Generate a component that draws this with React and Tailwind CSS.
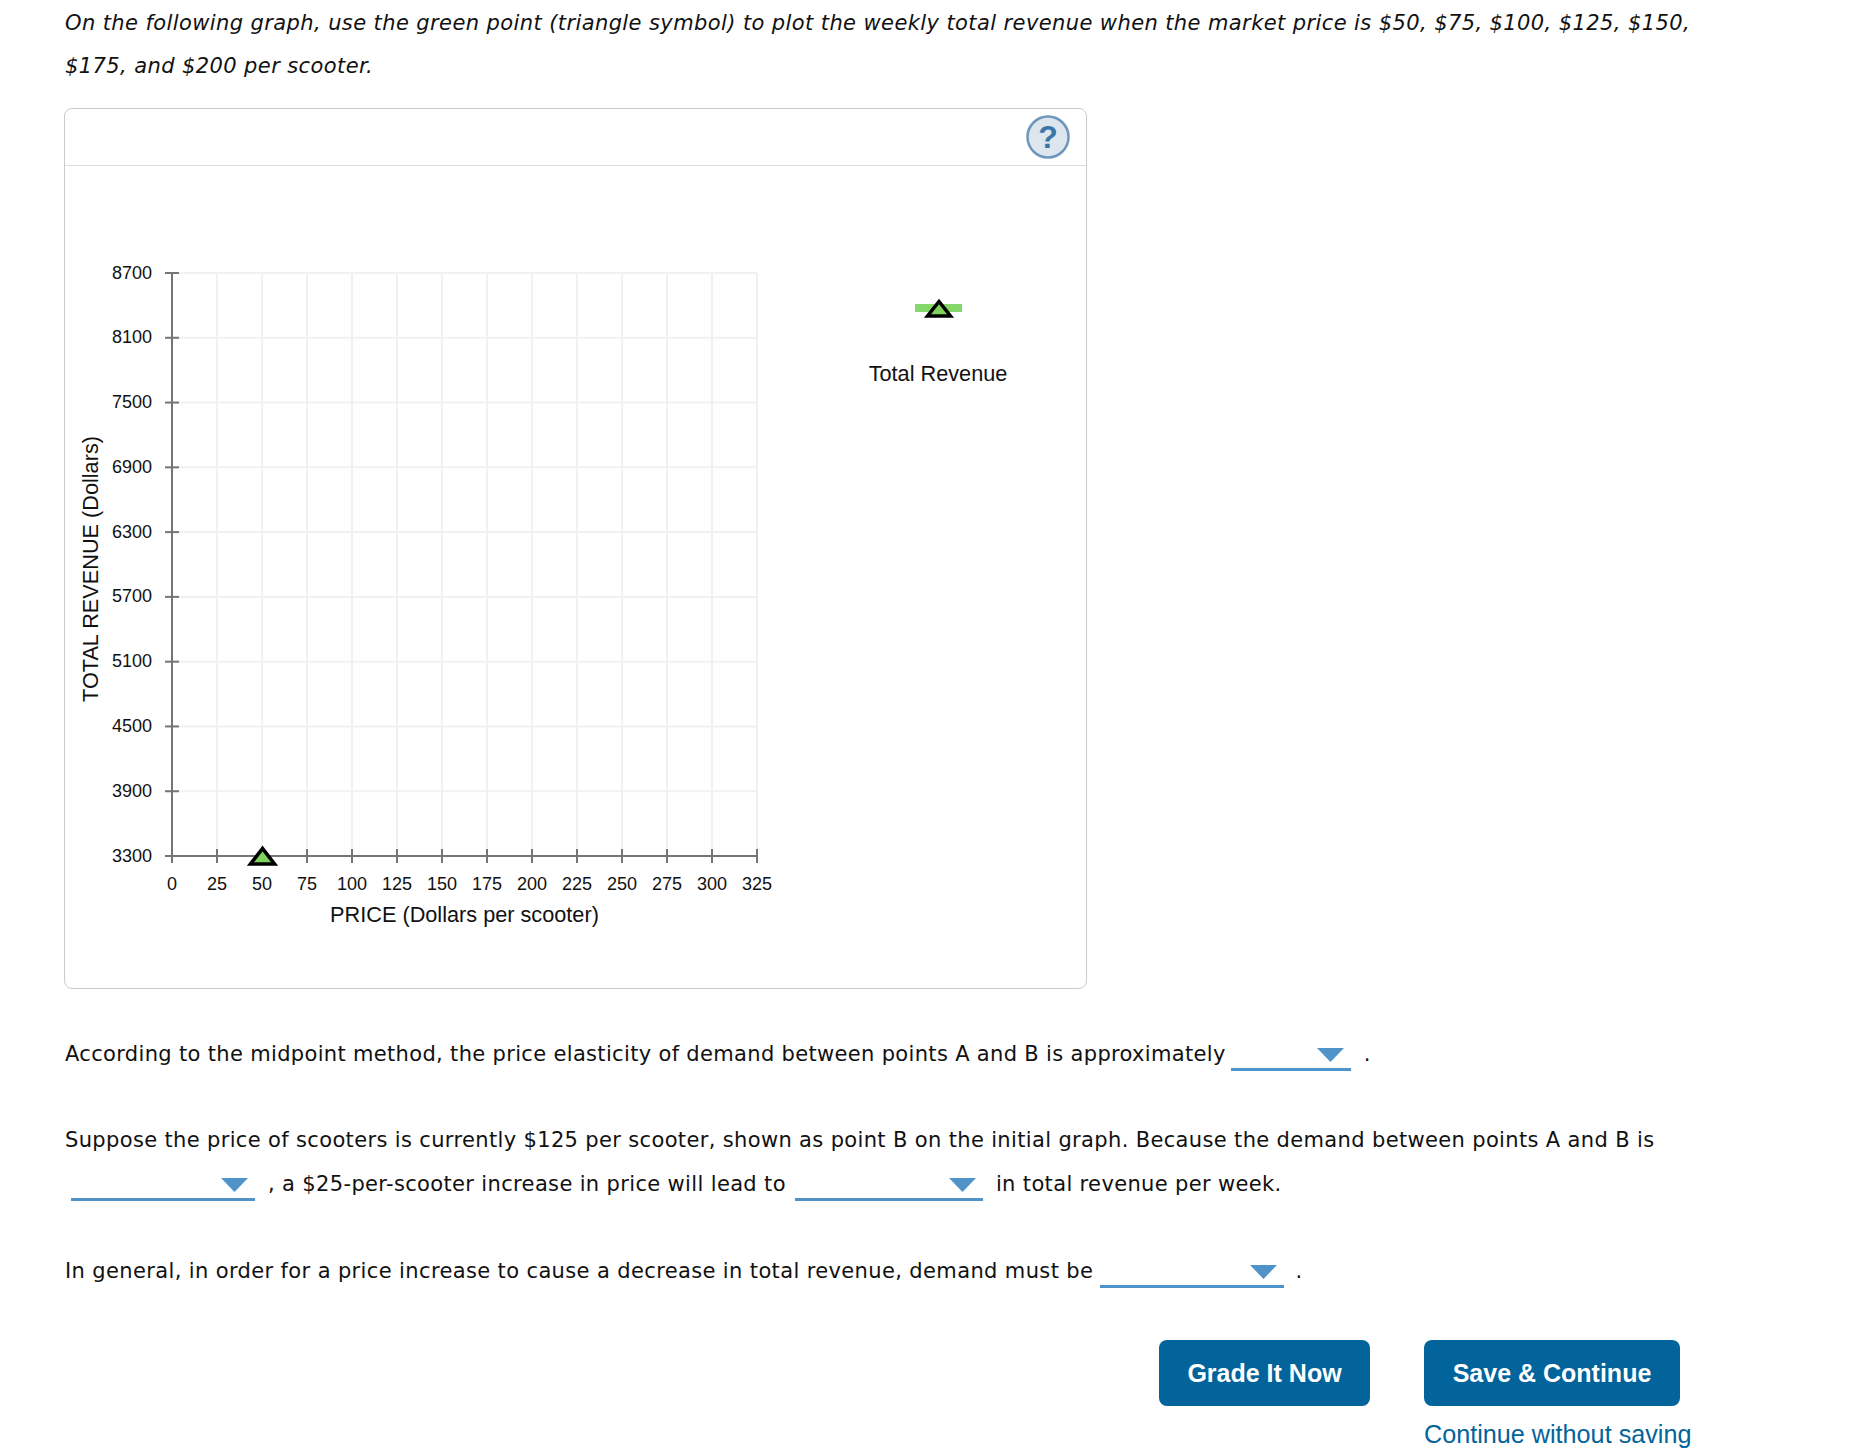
const SANS = 'font-["Liberation_Sans",Arial,sans-serif]';

const yLabels = [8700, 8100, 7500, 6900, 6300, 5700, 5100, 4500, 3900, 3300];
const xLabels = [0, 25, 50, 75, 100, 125, 150, 175, 200, 225, 250, 275, 300, 325];

function Chart() {
  const left = 172;
  const right = 757;
  const top = 273;
  const bottom = 856;
  const stepX = (right - left) / 13;
  const stepY = (bottom - top) / 9;
  return (
    <svg width="780" height="822" viewBox="65 166 780 822" className="block shrink-0" fontFamily="'Liberation Sans', Arial, sans-serif">
      {xLabels.slice(1).map((_, i) => (
        <line key={i} x1={left + stepX * (i + 1)} x2={left + stepX * (i + 1)} y1={top} y2={bottom} stroke="#f1f1f1" strokeWidth="2" />
      ))}
      {yLabels.slice(0, -1).map((_, i) => (
        <line key={i} x1={left} x2={right} y1={top + stepY * i} y2={top + stepY * i} stroke="#f1f1f1" strokeWidth="2" />
      ))}
      <line x1={left} x2={left} y1={top} y2={bottom} stroke="#757575" strokeWidth="2" />
      <line x1={left} x2={right} y1={bottom} y2={bottom} stroke="#757575" strokeWidth="2" />
      {yLabels.map((v, i) => (
        <g key={v}>
          <line x1="165" x2="179" y1={top + stepY * i} y2={top + stepY * i} stroke="#757575" strokeWidth="2" />
          <text x="152" y={top + stepY * i + 5.5} textAnchor="end" fontSize="18" fill="#111">{v}</text>
        </g>
      ))}
      {xLabels.map((v, i) => (
        <g key={v}>
          <line x1={left + stepX * i} x2={left + stepX * i} y1="849" y2="863" stroke="#757575" strokeWidth="2" />
          <text x={left + stepX * i} y="890" textAnchor="middle" fontSize="18" fill="#111">{v}</text>
        </g>
      ))}
      <text x="464.5" y="921.5" textAnchor="middle" fontSize="21.7" fill="#111">PRICE (Dollars per scooter)</text>
      <text transform="translate(98 569) rotate(-90)" textAnchor="middle" fontSize="21.7" fill="#111">TOTAL REVENUE (Dollars)</text>
      <path d="M262.5 848.5 L250.5 864 H274.5 Z" fill="#7fd35c" stroke="#000" strokeWidth="3.6" />
    </svg>
  );
}

function HelpIcon() {
  return (
    <svg width="44" height="44" viewBox="0 0 44 44" fontFamily="'Liberation Sans', Arial, sans-serif">
      <circle cx="22" cy="22" r="20.5" fill="#dde6ee" stroke="#6f97bd" strokeWidth="2.5" />
      <text x="22" y="33" textAnchor="middle" fontSize="32" fontWeight="700" fill="#3b75aa">?</text>
    </svg>
  );
}

function Legend() {
  return (
    <div className="w-[188px] pt-[132px] flex flex-col items-center">
      <svg width="48" height="22" viewBox="0 0 48 22" className="block">
        <rect x="0" y="6" width="47" height="8" fill="#84d86a" />
        <path d="M24 3.5 L12.5 18 H35.5 Z" fill="#7fd35c" stroke="#000" strokeWidth="3.5" />
      </svg>
      <div className={`${SANS} mt-[42px] -ml-[2px] text-[21.7px] leading-[24px] text-[#111] whitespace-nowrap`}>Total Revenue</div>
    </div>
  );
}

function Select({ width }) {
  return (
    <span className={`inline-flex justify-end align-middle h-[24px] translate-y-[4px] border-b-[3px] border-[#4f93c9] ${width}`}>
      <svg width="27" height="14" viewBox="0 0 27 14" className="mr-[7px] mt-[1px]">
        <path d="M0 0 H27 L13.5 14 Z" fill="#4f93c9" />
      </svg>
    </span>
  );
}

export default function App() {
  return (
    <div className="bg-white min-h-[1451px] pl-[65px] pt-[2px] font-['DejaVu_Sans',Verdana,sans-serif] text-[21px] leading-[43px] text-[#111] tracking-[0.35px]">
      <p className="italic w-[1700px] tracking-[0.4px]">
        On the following graph, use the green point (triangle symbol) to plot the weekly total revenue when the market price is $50, $75, $100, $125, $150,
        <br />
        $175, and $200 per scooter.
      </p>

      <div className="mt-[20px] -ml-[1px] w-[1023px] h-[881px] border border-[#cccccc] rounded-[8px] overflow-hidden tracking-normal">
        <div className="h-[57px] border-b border-[#dddddd] flex items-center justify-end pr-[16px]">
          <HelpIcon />
        </div>
        <div className="flex">
          <Chart />
          <Legend />
        </div>
      </div>

      <p className="mt-[44px] tracking-[0.33px]">
        According to the midpoint method, the price elasticity of demand between points A and B is approximately <Select width="w-[120px] -ml-[2px]" /> <span className="ml-[6px]">.</span>
      </p>

      <p className="mt-[42px] leading-[44px]">
        Suppose the price of scooters is currently $125 per scooter, shown as point B on the initial graph. Because the demand between points A and B is
        <br />
        <Select width="w-[184px] ml-[6px]" /> <span className="ml-[6px]">, a $25-per-scooter increase in price will lead to</span> <Select width="w-[188px] ml-[2px]" /> <span className="ml-[6px]">in total revenue per week.</span>
      </p>

      <p className="mt-[44px] tracking-[0.37px]">
        In general, in order for a price increase to cause a decrease in total revenue, demand must be <Select width="w-[184px]" /> <span className="ml-[4px]">.</span>
      </p>

      <div className={`${SANS} mt-[47px] flex justify-end items-start gap-[54px] pr-[169px] tracking-normal`}>
        <button className="w-[211px] h-[66px] rounded-[8px] bg-[#03639b] text-white font-bold text-[25px]">Grade It Now</button>
        <div className="w-[256px]">
          <button className="w-[256px] h-[66px] rounded-[8px] bg-[#03639b] text-white font-bold text-[25px]">Save &amp; Continue</button>
          <div className="mt-[14px] text-[25.2px] leading-[28px] text-[#03639b] whitespace-nowrap">Continue without saving</div>
        </div>
      </div>
    </div>
  );
}
